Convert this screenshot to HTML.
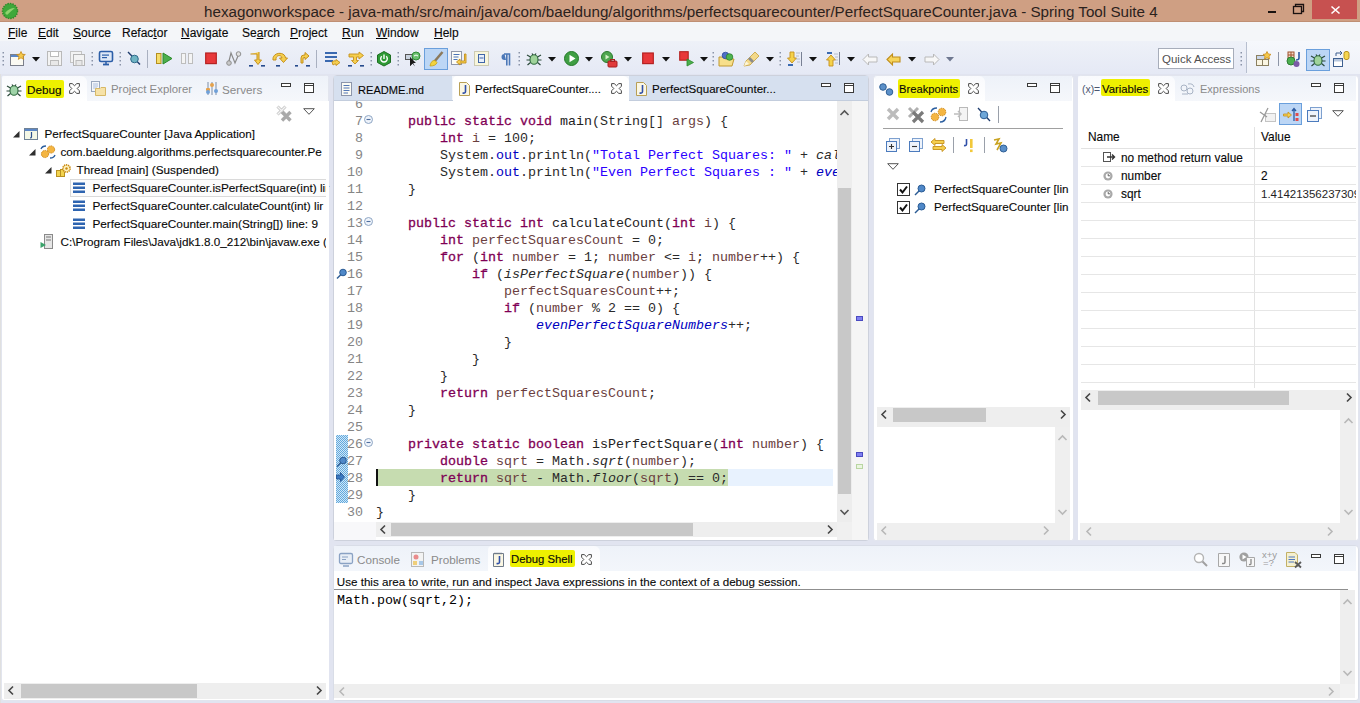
<!DOCTYPE html><html><head><meta charset="utf-8"><style>
*{margin:0;padding:0;box-sizing:border-box}
html,body{width:1360px;height:703px;overflow:hidden}
body{background:#e1e4f0;font-family:"Liberation Sans",sans-serif;font-size:12px;color:#1e1e1e;position:relative}
.a{position:absolute}
.nw{white-space:nowrap}
svg{position:absolute;overflow:visible}
.mono{font-family:"Liberation Mono",monospace}
#menu span{position:absolute;top:4px;font-size:12px;color:#0a0a0a;-webkit-text-stroke:0.12px #000;white-space:nowrap}
#menu u{text-decoration:underline;text-underline-offset:1px}
.panel{position:absolute;background:#fff;border:1px solid #d0d7e7;border-radius:4px 4px 3px 3px;overflow:hidden}
</style></head><body><div class="a" style="left:0px;top:0px;width:1360px;height:22px;background:#cf9f83"></div><div class="a" style="left:0px;top:21px;width:1360px;height:1px;background:#bf8f74"></div><svg style="left:1px;top:2px" width="18" height="18" viewBox="0 0 18 18"><circle cx="9" cy="9" r="7.5" fill="#3fa83a"/><path d="M4 11 Q8 6 14 6 Q10 9 6 13Z" fill="#8fd26f"/><circle cx="9" cy="9" r="7.5" fill="none" stroke="#2f8a2a" stroke-width="1.5" stroke-dasharray="1.5 1"/></svg><div class="a nw" style="left:204px;top:3px;font-size:15.19px;color:#2b221d;">hexagonworkspace - java-math/src/main/java/com/baeldung/algorithms/perfectsquarecounter/PerfectSquareCounter.java - Spring Tool Suite 4</div><div class="a" style="left:1268px;top:11px;width:8px;height:2px;background:#1a1210"></div><svg style="left:1293px;top:4px" width="11" height="10" viewBox="0 0 11 10"><rect x="0.5" y="2.5" width="8" height="7" fill="none" stroke="#1a1210" stroke-width="1.3"/><path d="M2.5 2.5V0.5H10.5V7.5H8.5" fill="none" stroke="#1a1210" stroke-width="1.3"/></svg><div class="a" style="left:1312px;top:0px;width:45px;height:19px;background:#c75150"></div><svg style="left:1331px;top:6px" width="9" height="8" viewBox="0 0 9 8"><path d="M0.5 0.5L8.5 7.5M8.5 0.5L0.5 7.5" stroke="#fff" stroke-width="1.6"/></svg><div id="menu" class="a" style="left:0;top:22px;width:1360px;height:19px;background:#f4f6f9"><span style="left:8px"><u>F</u>ile</span><span style="left:38px"><u>E</u>dit</span><span style="left:73px"><u>S</u>ource</span><span style="left:122px">Refac<u>t</u>or</span><span style="left:181px"><u>N</u>avigate</span><span style="left:242px">Se<u>a</u>rch</span><span style="left:290px"><u>P</u>roject</span><span style="left:342px"><u>R</u>un</span><span style="left:376px"><u>W</u>indow</span><span style="left:434px"><u>H</u>elp</span></div><div class="a" style="left:0px;top:41px;width:1360px;height:33px;background:linear-gradient(#eef1f8,#e5e9f5)"></div><div class="a" style="left:1246px;top:41px;width:114px;height:33px;background:linear-gradient(#f6f8fc,#eef1f8)"></div><svg style="left:2px;top:51px" width="3" height="16" viewBox="0 0 3 16"><rect x="0.5" y="1" width="1.5" height="1.5" fill="#8a93a8"/><rect x="0.5" y="5" width="1.5" height="1.5" fill="#8a93a8"/><rect x="0.5" y="9" width="1.5" height="1.5" fill="#8a93a8"/><rect x="0.5" y="13" width="1.5" height="1.5" fill="#8a93a8"/></svg><svg style="left:10px;top:51px" width="16" height="16" viewBox="0 0 16 16"><rect x="0.5" y="3.5" width="13" height="11" fill="#fbfaf2" stroke="#7b7f8a"/><rect x="1" y="4" width="12" height="2" fill="#5b86c6"/><path d="M11 0.5L12.3 3.2L15.3 3.5L13 5.4L13.7 8.4L11 6.8L8.3 8.4L9 5.4L6.7 3.5L9.7 3.2Z" fill="#f4c84a" stroke="#c98b1a" stroke-width="0.8"/></svg><svg style="left:32px;top:57px" width="8" height="5" viewBox="0 0 8 5"><path d="M0 0H8L4 4.5Z" fill="#111"/></svg><svg style="left:47px;top:51px" width="15" height="15" viewBox="0 0 15 15"><rect x="0.5" y="0.5" width="14" height="14" fill="#f3f3f3" stroke="#b9b9b9"/><rect x="3.5" y="0.5" width="8" height="5" fill="#fff" stroke="#bbb"/><rect x="3.5" y="9.5" width="8" height="5" fill="#e8e8e8" stroke="#bbb"/></svg><svg style="left:70px;top:51px" width="15" height="15" viewBox="0 0 15 15"><rect x="0.5" y="0.5" width="11" height="11" fill="#f3f3f3" stroke="#c4c4c4"/><rect x="3.5" y="3.5" width="11" height="11" fill="#f3f3f3" stroke="#b5b5b5"/><rect x="6" y="9.5" width="6" height="5" fill="#e8e8e8" stroke="#bbb"/></svg><svg style="left:91px;top:51px" width="3" height="16" viewBox="0 0 3 16"><rect x="0.5" y="1" width="1.5" height="1.5" fill="#8a93a8"/><rect x="0.5" y="5" width="1.5" height="1.5" fill="#8a93a8"/><rect x="0.5" y="9" width="1.5" height="1.5" fill="#8a93a8"/><rect x="0.5" y="13" width="1.5" height="1.5" fill="#8a93a8"/></svg><svg style="left:99px;top:51px" width="15" height="15" viewBox="0 0 15 15"><rect x="0.5" y="0.5" width="13" height="10" rx="1.5" fill="#dfe9f7" stroke="#2c5ea8" stroke-width="1.6"/><rect x="3" y="3.5" width="7" height="1.2" fill="#2c5ea8"/><rect x="3" y="6" width="5" height="1.2" fill="#2c5ea8"/><path d="M4 13.5H10" stroke="#2c5ea8" stroke-width="1.8"/><path d="M7 11V13" stroke="#2c5ea8" stroke-width="1.5"/></svg><svg style="left:119px;top:51px" width="3" height="16" viewBox="0 0 3 16"><rect x="0.5" y="1" width="1.5" height="1.5" fill="#8a93a8"/><rect x="0.5" y="5" width="1.5" height="1.5" fill="#8a93a8"/><rect x="0.5" y="9" width="1.5" height="1.5" fill="#8a93a8"/><rect x="0.5" y="13" width="1.5" height="1.5" fill="#8a93a8"/></svg><svg style="left:127px;top:51px" width="14" height="15" viewBox="0 0 14 15"><path d="M1 1L13 13.5" stroke="#1f3c6e" stroke-width="1.4"/><circle cx="7.5" cy="8" r="3.8" fill="#6fb4c4" stroke="#2f6a8a"/></svg><div class="a" style="left:147px;top:50px;width:1px;height:18px;background:#a9b0c0"></div><svg style="left:156px;top:51px" width="17" height="15" viewBox="0 0 17 15"><rect x="0.5" y="2.5" width="4.5" height="10" fill="#f6dd6a" stroke="#b58f1f"/><path d="M7 2L16 7.5L7 13Z" fill="#4cae4c" stroke="#2a8a2a"/></svg><svg style="left:181px;top:51px" width="13" height="15" viewBox="0 0 13 15"><rect x="0.5" y="2.5" width="4" height="10" fill="#f4f4f4" stroke="#bdbdbd"/><rect x="7.5" y="2.5" width="4" height="10" fill="#f4f4f4" stroke="#bdbdbd"/></svg><svg style="left:205px;top:51px" width="12" height="15" viewBox="0 0 12 15"><rect x="0.7" y="2" width="10.6" height="10.6" fill="#e8383a" stroke="#b52222" stroke-width="1.2"/></svg><svg style="left:226px;top:51px" width="15" height="15" viewBox="0 0 15 15"><circle cx="3" cy="12" r="2.3" fill="#c9c9c9" stroke="#8f8f8f"/><circle cx="12.5" cy="3" r="2.3" fill="#e0e0e0" stroke="#8f8f8f"/><path d="M3 10L5 2L9 12L12 5" fill="none" stroke="#8a8a8a" stroke-width="1.2"/></svg><svg style="left:249px;top:51px" width="16" height="16" viewBox="0 0 16 16"><path d="M1.5 3H8V9H5.5L9 13.5L12.5 9H10V1" fill="#f5cf4f" stroke="#c5901c" stroke-width="1"/><rect x="0" y="14" width="4" height="1.6" fill="#254a8c"/><rect x="12" y="14" width="4" height="1.6" fill="#254a8c"/></svg><svg style="left:272px;top:51px" width="16" height="16" viewBox="0 0 16 16"><path d="M1 9C0 1 13 0 13.5 7H15.5L11.5 11.5L7.5 7H10C9.5 3.5 3.5 3.5 4 9Z" fill="#f5cf4f" stroke="#c5901c" stroke-width="1"/><rect x="4" y="14" width="4" height="1.6" fill="#254a8c"/></svg><svg style="left:295px;top:51px" width="16" height="16" viewBox="0 0 16 16"><path d="M6 12V7Q6 4 9 4H10V1.5L14 5L10 8.5V6.5H9Q8 6.5 8 8V12Z" fill="#f5cf4f" stroke="#c5901c" stroke-width="1"/><rect x="0" y="14" width="3" height="1.6" fill="#254a8c"/><rect x="11" y="14" width="4" height="1.6" fill="#254a8c"/></svg><div class="a" style="left:316px;top:50px;width:1px;height:18px;background:#a9b0c0"></div><svg style="left:325px;top:51px" width="16" height="16" viewBox="0 0 16 16"><rect x="0" y="1" width="12" height="2" fill="#3a69b0"/><rect x="0" y="5" width="12" height="2" fill="#3a69b0"/><rect x="0" y="9" width="8" height="2" fill="#3a69b0"/><path d="M7 11Q9 9 11 10V8.5L15 11.5L11 14.5V13Q9 13 8 14Z" fill="#f5cf4f" stroke="#c5901c" stroke-width="0.9"/></svg><svg style="left:348px;top:51px" width="17" height="16" viewBox="0 0 17 16"><path d="M1 3H11V1L15.5 4.5L11 8V6H8.5V9.5H10.5L7 13L3.5 9.5H5.5V6H1Z" fill="#f5cf4f" stroke="#c5901c" stroke-width="0.9"/><rect x="0" y="14" width="4" height="1.6" fill="#254a8c"/><rect x="12" y="14" width="4" height="1.6" fill="#254a8c"/></svg><svg style="left:370px;top:51px" width="3" height="16" viewBox="0 0 3 16"><rect x="0.5" y="1" width="1.5" height="1.5" fill="#8a93a8"/><rect x="0.5" y="5" width="1.5" height="1.5" fill="#8a93a8"/><rect x="0.5" y="9" width="1.5" height="1.5" fill="#8a93a8"/><rect x="0.5" y="13" width="1.5" height="1.5" fill="#8a93a8"/></svg><svg style="left:377px;top:51px" width="14" height="15" viewBox="0 0 14 15"><path d="M7 0.5L13.5 4V11.5L7 15L0.5 11.5V4Z" fill="#2e9a35" stroke="#1d6e22"/><path d="M4.8 5.3A3.3 3.3 0 1 0 9.2 5.3" fill="none" stroke="#fff" stroke-width="1.4"/><path d="M7 3.5V8" stroke="#fff" stroke-width="1.4"/></svg><svg style="left:397px;top:51px" width="3" height="16" viewBox="0 0 3 16"><rect x="0.5" y="1" width="1.5" height="1.5" fill="#8a93a8"/><rect x="0.5" y="5" width="1.5" height="1.5" fill="#8a93a8"/><rect x="0.5" y="9" width="1.5" height="1.5" fill="#8a93a8"/><rect x="0.5" y="13" width="1.5" height="1.5" fill="#8a93a8"/></svg><svg style="left:405px;top:51px" width="16" height="16" viewBox="0 0 16 16"><rect x="0.5" y="3.5" width="7" height="5" fill="#c9d2de" stroke="#555"/><path d="M5 6L5 15L7.5 12.5L10 15.5" fill="#1b1b1b"/><path d="M5 6L5 15L8 12L11 12Z" fill="#1b1b1b"/><circle cx="11" cy="5" r="4" fill="#6cc070" stroke="#2f8a34"/><path d="M9 5Q11 3 13 5" fill="none" stroke="#fff" stroke-width="1"/></svg><div class="a" style="left:424px;top:48px;width:24px;height:22px;background:#bcd6f5;border:1px solid #6a9fdc"></div><svg style="left:428px;top:51px" width="16" height="16" viewBox="0 0 16 16"><path d="M14.5 1L6 11" stroke="#8c7a5c" stroke-width="2.5"/><path d="M2 15Q3 9 7 9.5L9 11.5Q8 15 2 15Z" fill="#f2d33e" stroke="#c9a316" stroke-width="0.8"/></svg><svg style="left:451px;top:51px" width="16" height="16" viewBox="0 0 16 16"><rect x="0.5" y="0.5" width="10" height="13" fill="#fdfdf7" stroke="#9098aa"/><rect x="2.5" y="3" width="6" height="1" fill="#4a74b8"/><rect x="2.5" y="5.5" width="5" height="1" fill="#4a74b8"/><rect x="2.5" y="8" width="4" height="1" fill="#4a74b8"/><path d="M13.5 3V10H9V8L5.5 11L9 14V12H15V3Z" fill="#f5cf4f" stroke="#c5901c" stroke-width="0.9"/></svg><svg style="left:474px;top:51px" width="15" height="15" viewBox="0 0 15 15"><rect x="0.5" y="0.5" width="14" height="14" fill="#f8f6dc" stroke="#a9a47a" stroke-dasharray="1 1"/><rect x="4.5" y="3.5" width="6" height="8" fill="#e7effa" stroke="#4066a8"/><rect x="5.5" y="6.5" width="4" height="1" fill="#4066a8"/></svg><svg style="left:500px;top:53px" width="10" height="13" viewBox="0 0 10 13"><path d="M4 1H9.5V12.5M6.8 1V12.5" stroke="#4c78b8" stroke-width="1.6" fill="none"/><path d="M4.5 1A3 3 0 0 0 4.5 7H6" fill="#4c78b8"/></svg><svg style="left:518px;top:51px" width="3" height="16" viewBox="0 0 3 16"><rect x="0.5" y="1" width="1.5" height="1.5" fill="#8a93a8"/><rect x="0.5" y="5" width="1.5" height="1.5" fill="#8a93a8"/><rect x="0.5" y="9" width="1.5" height="1.5" fill="#8a93a8"/><rect x="0.5" y="13" width="1.5" height="1.5" fill="#8a93a8"/></svg><svg style="left:526px;top:51px" width="16" height="16" viewBox="0 0 16 16"><ellipse cx="8" cy="8.5" rx="4" ry="4.8" fill="#9fd39a" stroke="#2f6e3e" stroke-width="1.1"/><path d="M1 4L4.5 6M15 4L11.5 6M0.5 9H4M15.5 9H12M1.5 14L4.5 11.5M14.5 14L11.5 11.5M6 2.5L7 4M10 2.5L9 4" stroke="#2b4a3a" stroke-width="1.2"/></svg><svg style="left:548px;top:57px" width="8" height="5" viewBox="0 0 8 5"><path d="M0 0H8L4 4.5Z" fill="#111"/></svg><svg style="left:564px;top:51px" width="15" height="15" viewBox="0 0 15 15"><circle cx="7.5" cy="7.5" r="7" fill="#3f9e43" stroke="#237a28"/><path d="M5.5 3.8L11.5 7.5L5.5 11.2Z" fill="#fff"/></svg><svg style="left:585px;top:57px" width="8" height="5" viewBox="0 0 8 5"><path d="M0 0H8L4 4.5Z" fill="#111"/></svg><svg style="left:601px;top:51px" width="17" height="17" viewBox="0 0 17 17"><circle cx="6" cy="6" r="5.5" fill="#4ea64f" stroke="#2a7a2d"/><path d="M4.5 3.5L8.5 6L4.5 8.5Z" fill="#d6f0c9"/><rect x="7" y="10" width="9" height="6" rx="1" fill="#e13a3a" stroke="#a81f1f"/><rect x="9.5" y="8.5" width="4" height="2" fill="none" stroke="#a81f1f"/></svg><svg style="left:624px;top:57px" width="8" height="5" viewBox="0 0 8 5"><path d="M0 0H8L4 4.5Z" fill="#111"/></svg><svg style="left:642px;top:51px" width="12" height="15" viewBox="0 0 12 15"><rect x="0.7" y="2" width="10.6" height="10.6" fill="#e8383a" stroke="#b52222" stroke-width="1.2"/></svg><svg style="left:662px;top:57px" width="8" height="5" viewBox="0 0 8 5"><path d="M0 0H8L4 4.5Z" fill="#111"/></svg><svg style="left:679px;top:51px" width="15" height="16" viewBox="0 0 15 16"><rect x="0.7" y="0.7" width="8.5" height="8.5" fill="#e8383a" stroke="#b52222" stroke-width="1.1"/><path d="M8 8L14.5 11.5L8 15Z" fill="#4cae4c" stroke="#2a8a2a" stroke-width="0.8"/></svg><svg style="left:700px;top:57px" width="8" height="5" viewBox="0 0 8 5"><path d="M0 0H8L4 4.5Z" fill="#111"/></svg><svg style="left:712px;top:51px" width="3" height="16" viewBox="0 0 3 16"><rect x="0.5" y="1" width="1.5" height="1.5" fill="#8a93a8"/><rect x="0.5" y="5" width="1.5" height="1.5" fill="#8a93a8"/><rect x="0.5" y="9" width="1.5" height="1.5" fill="#8a93a8"/><rect x="0.5" y="13" width="1.5" height="1.5" fill="#8a93a8"/></svg><svg style="left:718px;top:51px" width="18" height="16" viewBox="0 0 18 16"><path d="M1 6H6L8 8H16L14 15H1Z" fill="#f7df8a" stroke="#c19a32"/><circle cx="7.5" cy="4.5" r="3.3" fill="#4f6fc6" stroke="#2c4a9a" stroke-width="0.8"/><circle cx="11.5" cy="6" r="3.3" fill="#4fb44f" stroke="#2a8030" stroke-width="0.8"/></svg><svg style="left:743px;top:51px" width="17" height="16" viewBox="0 0 17 16"><path d="M1 15L3 10L12 1L16 5L7 14Z" fill="#f3d98a" stroke="#c9a74a" stroke-width="0.9"/><path d="M5 8L9 12L11 10L7 6Z" fill="#8c8c8c"/><path d="M1 15L3 10L6 13Z" fill="#fdf6d8"/></svg><svg style="left:766px;top:57px" width="8" height="5" viewBox="0 0 8 5"><path d="M0 0H8L4 4.5Z" fill="#111"/></svg><svg style="left:779px;top:51px" width="3" height="16" viewBox="0 0 3 16"><rect x="0.5" y="1" width="1.5" height="1.5" fill="#8a93a8"/><rect x="0.5" y="5" width="1.5" height="1.5" fill="#8a93a8"/><rect x="0.5" y="9" width="1.5" height="1.5" fill="#8a93a8"/><rect x="0.5" y="13" width="1.5" height="1.5" fill="#8a93a8"/></svg><svg style="left:787px;top:51px" width="16" height="16" viewBox="0 0 16 16"><path d="M3 1H7V7H9.5L5 12L0.5 7H3Z" fill="#f5d24a" stroke="#c5901c" stroke-width="0.9"/><rect x="1" y="13" width="5" height="2" fill="#3a6ab0"/><path d="M9 2H13M9 5H12M9 8H13M10 11H13" stroke="#aab3c2" stroke-width="0.8"/><path d="M14.5 1V15" stroke="#6b7488" stroke-width="0.9"/></svg><svg style="left:809px;top:57px" width="8" height="5" viewBox="0 0 8 5"><path d="M0 0H8L4 4.5Z" fill="#111"/></svg><svg style="left:825px;top:51px" width="16" height="16" viewBox="0 0 16 16"><path d="M4 15H8V9H10.5L6 4L1.5 9H4Z" fill="#f5d24a" stroke="#c5901c" stroke-width="0.9"/><rect x="2" y="1" width="5" height="2" fill="#3a6ab0"/><path d="M9 3H13M10 6H13M10 9H13M10 12H13" stroke="#aab3c2" stroke-width="0.8"/><path d="M14.5 1V14" stroke="#6b7488" stroke-width="0.9"/></svg><svg style="left:847px;top:57px" width="8" height="5" viewBox="0 0 8 5"><path d="M0 0H8L4 4.5Z" fill="#111"/></svg><svg style="left:862px;top:53px" width="16" height="13" viewBox="0 0 16 13"><path d="M1 6.5L6.5 1V4H15V9H6.5V12Z" fill="#f7f7f7" stroke="#b9b9b9"/></svg><svg style="left:886px;top:53px" width="15" height="13" viewBox="0 0 15 13"><path d="M1 6.5L6.5 1V4H14V9H6.5V12Z" fill="#f6d45a" stroke="#c08e1a" stroke-width="1.1"/></svg><svg style="left:908px;top:57px" width="8" height="5" viewBox="0 0 8 5"><path d="M0 0H8L4 4.5Z" fill="#111"/></svg><svg style="left:924px;top:53px" width="16" height="13" viewBox="0 0 16 13"><path d="M15 6.5L9.5 1V4H1V9H9.5V12Z" fill="#f7f7f7" stroke="#b9b9b9"/></svg><svg style="left:946px;top:57px" width="8" height="5" viewBox="0 0 8 5"><path d="M0 0H8L4 4.5Z" fill="#6f7890"/></svg><div class="a" style="left:1158px;top:48px;width:76px;height:21px;background:#fff;border:1px solid #a7adba"></div><div class="a nw" style="left:1162px;top:54.26px;font-size:11.5px;line-height:11.5px;color:#505050">Quick Access</div><svg style="left:1240px;top:51px" width="3" height="16" viewBox="0 0 3 16"><rect x="0.5" y="1" width="1.5" height="1.5" fill="#8a93a8"/><rect x="0.5" y="5" width="1.5" height="1.5" fill="#8a93a8"/><rect x="0.5" y="9" width="1.5" height="1.5" fill="#8a93a8"/><rect x="0.5" y="13" width="1.5" height="1.5" fill="#8a93a8"/></svg><div class="a" style="left:1246px;top:42px;width:1px;height:31px;background:#b7bfcf"></div><svg style="left:1256px;top:51px" width="15" height="15" viewBox="0 0 15 15"><rect x="0.5" y="4.5" width="12" height="10" fill="#fbf6e2" stroke="#8b8060"/><path d="M0.5 8.5H12.5M6.5 4.5V14.5" stroke="#8b8060"/><rect x="1" y="5" width="11" height="3" fill="#c9d6ea"/><path d="M11 0.5L12.3 3L15 3.4L13 5.2L13.5 8L11 6.7L8.5 8L9 5.2L7 3.4L9.7 3Z" fill="#f4c84a" stroke="#c98b1a" stroke-width="0.8"/></svg><div class="a" style="left:1278px;top:52px;width:1px;height:14px;background:#8d95a6"></div><svg style="left:1286px;top:51px" width="17" height="16" viewBox="0 0 17 16"><rect x="2" y="1" width="6" height="6" fill="#f4d9c9" stroke="#a0522d"/><path d="M2 4H8M5 1V7" stroke="#a0522d"/><circle cx="5" cy="10" r="4" fill="#4caf50" stroke="#2e7d32"/><circle cx="10.5" cy="13" r="3" fill="#7b5aa6"/><path d="M13 1V7Q13 9 10 9" fill="none" stroke="#2c5aa0" stroke-width="1.6"/></svg><div class="a" style="left:1306px;top:49px;width:24px;height:22px;background:#bcd6f5;border:1px solid #6a9fdc"></div><svg style="left:1310px;top:52px" width="16" height="16" viewBox="0 0 16 16"><ellipse cx="8" cy="8.5" rx="4" ry="4.8" fill="#9fd39a" stroke="#2f6e3e" stroke-width="1.1"/><path d="M1 4L4.5 6M15 4L11.5 6M0.5 9H4M15.5 9H12M1.5 14L4.5 11.5M14.5 14L11.5 11.5M6 2.5L7 4M10 2.5L9 4" stroke="#2b4a3a" stroke-width="1.2"/></svg><svg style="left:1333px;top:51px" width="16" height="16" viewBox="0 0 16 16"><rect x="0.5" y="7.5" width="9" height="8" fill="#fff" stroke="#3d5f8f"/><rect x="1" y="8" width="8" height="2.5" fill="#b7c7de"/><rect x="11" y="0.5" width="5" height="8" rx="2" fill="#f5d54f" stroke="#b9921a"/><path d="M3 5V2H9M7 0L9 2L7 4" fill="none" stroke="#3d5f8f" stroke-width="1"/></svg><div class="panel" style="left:1px;top:75px;width:328px;height:626px;border-color:#e2e5ee"></div><div class="a" style="left:0px;top:74px;width:1px;height:629px;background:#e0e0e0"></div><div class="a" style="left:2px;top:76px;width:326px;height:25px;background:linear-gradient(#eef2f9,#f5f7fb)"></div><div class="a" style="left:2px;top:76px;width:85px;height:25px;background:linear-gradient(#f9fafd,#ffffff);border-radius:3px 6px 0 0"></div><svg style="left:6px;top:82px" width="16" height="16" viewBox="0 0 16 16"><ellipse cx="8" cy="8.5" rx="4" ry="4.8" fill="#9fd3a8" stroke="#2f6e3e" stroke-width="1.1"/><path d="M1 4L4.5 6M15 4L11.5 6M0.5 9H4M15.5 9H12M1.5 14L4.5 11.5M14.5 14L11.5 11.5M6 2.5L7 4M10 2.5L9 4" stroke="#2b4a3a" stroke-width="1.2"/></svg><div class="a" style="left:26px;top:80px;width:38px;height:18px;background:#eef000;border-radius:2px"></div><div class="a nw" style="left:27px;top:83.69px;font-size:11.7px;line-height:11.7px;color:#0a0a0a;-webkit-text-stroke:0.12px #000;">Debug</div><svg style="left:69px;top:83px" width="11" height="11" viewBox="0 0 11 11"><path d="M0.6 0.6H3.2L5.5 2.7L7.8 0.6H10.4V3.2L8.2 5.5L10.4 7.8V10.4H7.8L5.5 8.3L3.2 10.4H0.6V7.8L2.8 5.5L0.6 3.2Z" fill="#fff" stroke="#4a4a4a" stroke-width="1"/></svg><svg style="left:91px;top:81px" width="15" height="15" viewBox="0 0 15 15"><rect x="0.5" y="0.5" width="8" height="10" fill="#f4f6fa" stroke="#9aa7bd"/><path d="M2 3H7M2 5H7M2 7H6" stroke="#9ab0d4" stroke-width="0.8"/><path d="M4.5 7.5H9L10 6.5H14.5V14.5H4.5Z" fill="#f6e2a8" stroke="#d7b866"/></svg><div class="a nw" style="left:111px;top:83.95px;font-size:11.4px;line-height:11.4px;color:#8a8a8a;">Project Explorer</div><svg style="left:205px;top:81px" width="14" height="15" viewBox="0 0 14 15"><path d="M3 1V14M7 1V14M11 1V14" stroke="#7c8da6" stroke-width="1"/><rect x="1" y="7" width="4" height="3" rx="1" fill="#e5a24c"/><circle cx="7" cy="4" r="2" fill="#e5a24c"/><circle cx="11" cy="10" r="2" fill="#6fa0d8"/><circle cx="3" cy="11" r="2" fill="#6fa0d8"/></svg><div class="a nw" style="left:222px;top:83.69px;font-size:11.7px;line-height:11.7px;color:#8a8a8a;">Servers</div><div class="a" style="left:281px;top:83px;width:10px;height:4px;border:1px solid #3a3a3a;background:#fff"></div><div class="a" style="left:304px;top:83px;width:10px;height:10px;border:1px solid #3a3a3a;background:#fff"></div><div class="a" style="left:304px;top:85px;width:10px;height:1px;background:#3a3a3a"></div><svg style="left:276px;top:105px" width="16" height="18" viewBox="0 0 16 18"><path d="M1.5 1.5L9.5 9.5M9.5 1.5L1.5 9.5" stroke="#c4c4c4" stroke-width="3"/><path d="M1.5 1.5L9.5 9.5M9.5 1.5L1.5 9.5" stroke="#f4f4f4" stroke-width="1.2"/><path d="M6 7L14.5 15.5M14.5 7L6 15.5" stroke="#a9a9a9" stroke-width="3.4"/></svg><svg style="left:303px;top:108px" width="12" height="7" viewBox="0 0 12 7"><path d="M0.7 0.7H11.3L6 6.3Z" fill="#fff" stroke="#555" stroke-width="1"/></svg><svg style="left:13px;top:131px" width="7" height="7" viewBox="0 0 7 7"><path d="M6.5 0V6.5H0Z" fill="#2e2e2e"/></svg><svg style="left:24px;top:128px" width="14" height="12" viewBox="0 0 14 12"><rect x="0.5" y="0.5" width="13" height="11" fill="#f3f7e6" stroke="#6f8296"/><rect x="1" y="1" width="12" height="2" fill="#5b86c6"/><path d="M7.5 4V9Q7.5 10 6 10" fill="none" stroke="#2a4f8f" stroke-width="1.2"/></svg><div class="a nw" style="left:44.5px;top:127.69px;font-size:11.7px;line-height:11.7px;color:#0a0a0a;-webkit-text-stroke:0.12px #000;">PerfectSquareCounter [Java Application]</div><svg style="left:29px;top:149px" width="7" height="7" viewBox="0 0 7 7"><path d="M6.5 0V6.5H0Z" fill="#2e2e2e"/></svg><svg style="left:40px;top:145px" width="16" height="14" viewBox="0 0 16 14"><circle cx="5" cy="9" r="3.6" fill="#f4b542" stroke="#d08a1a" stroke-dasharray="1.5 0.8"/><circle cx="11" cy="4.5" r="3.6" fill="#f4b542" stroke="#d08a1a" stroke-dasharray="1.5 0.8"/><path d="M1 4Q2 1 6 1M15 10Q14 13 10 13" fill="none" stroke="#2c5fa0" stroke-width="1.3"/></svg><div class="a nw" style="left:60.5px;top:145.89px;font-size:11.7px;line-height:11.7px;color:#0a0a0a;-webkit-text-stroke:0.12px #000;">com.baeldung.algorithms.perfectsquarecounter.Pe</div><svg style="left:45px;top:167px" width="7" height="7" viewBox="0 0 7 7"><path d="M6.5 0V6.5H0Z" fill="#2e2e2e"/></svg><svg style="left:56px;top:164px" width="15" height="13" viewBox="0 0 15 13"><rect x="0.5" y="6.5" width="4" height="6" fill="#f2d34f" stroke="#b99120"/><rect x="4.5" y="5.5" width="4" height="7" fill="#f2d34f" stroke="#b99120"/><circle cx="10.5" cy="4.5" r="3.6" fill="#fff3c0" stroke="#c98a10" stroke-width="1.6" stroke-dasharray="1.3 0.7"/><circle cx="10.5" cy="4.5" r="1.2" fill="#c98a10"/></svg><div class="a nw" style="left:76.5px;top:163.99px;font-size:11.7px;line-height:11.7px;color:#0a0a0a;-webkit-text-stroke:0.12px #000;">Thread [main] (Suspended)</div><div class="a" style="left:70px;top:179px;width:259px;height:18px;border:1px solid #dadada;border-right:none;background:#fcfcfc"></div><svg style="left:73px;top:182px" width="13" height="12" viewBox="0 0 13 12"><rect x="0" y="0.5" width="12" height="2.5" fill="#2e64b0"/><rect x="0" y="4.5" width="12" height="2.5" fill="#2e64b0"/><rect x="0" y="8.5" width="12" height="2.5" fill="#2e64b0"/></svg><div class="a nw" style="left:92.4px;top:182.91px;font-size:11.8px;line-height:11.8px;color:#0a0a0a;-webkit-text-stroke:0.12px #000;">PerfectSquareCounter.isPerfectSquare(int) lir</div><svg style="left:73px;top:200px" width="13" height="12" viewBox="0 0 13 12"><rect x="0" y="0.5" width="12" height="2.5" fill="#2e64b0"/><rect x="0" y="4.5" width="12" height="2.5" fill="#2e64b0"/><rect x="0" y="8.5" width="12" height="2.5" fill="#2e64b0"/></svg><div class="a nw" style="left:92.4px;top:200.91px;font-size:11.8px;line-height:11.8px;color:#0a0a0a;-webkit-text-stroke:0.12px #000;">PerfectSquareCounter.calculateCount(int) lir</div><svg style="left:73px;top:218px" width="13" height="12" viewBox="0 0 13 12"><rect x="0" y="0.5" width="12" height="2.5" fill="#2e64b0"/><rect x="0" y="4.5" width="12" height="2.5" fill="#2e64b0"/><rect x="0" y="8.5" width="12" height="2.5" fill="#2e64b0"/></svg><div class="a nw" style="left:92.4px;top:218.91px;font-size:11.8px;line-height:11.8px;color:#0a0a0a;-webkit-text-stroke:0.12px #000;">PerfectSquareCounter.main(String[]) line: 9</div><svg style="left:40px;top:234px" width="14" height="15" viewBox="0 0 14 15"><rect x="4.5" y="0.5" width="8" height="14" fill="#e6e6e6" stroke="#8a8a8a"/><path d="M6 3H11M6 6H11" stroke="#777"/><path d="M0.5 8L6 11L0.5 14Z" fill="#3aa36a"/></svg><div class="a nw" style="left:60.5px;top:236.09px;font-size:11.7px;line-height:11.7px;color:#0a0a0a;-webkit-text-stroke:0.12px #000;">C:\Program Files\Java\jdk1.8.0_212\bin\javaw.exe (</div><div class="a" style="left:326px;top:101px;width:3px;height:599px;background:#fff"></div><div class="a" style="left:4px;top:683px;width:322px;height:16px;background:#eeeeee"></div><div class="a" style="left:21px;top:684px;width:176px;height:14px;background:#c8c8c8"></div><svg style="left:8px;top:686px" width="6" height="9" viewBox="0 0 6 9"><path d="M5 0.5L1 4.5L5 8.5" fill="none" stroke="#444" stroke-width="1.6"/></svg><svg style="left:316px;top:686px" width="6" height="9" viewBox="0 0 6 9"><path d="M1 0.5L5 4.5L1 8.5" fill="none" stroke="#444" stroke-width="1.6"/></svg><div class="panel" style="left:333px;top:75px;width:536px;height:466px;border-color:#cdd1dc"></div><div class="a" style="left:334px;top:76px;width:534px;height:24px;background:#f3f6fb"></div><div class="a" style="left:334px;top:76px;width:118px;height:24px;background:#d6e0ef"></div><div class="a" style="left:334px;top:100px;width:534px;height:1px;background:#c3cddd"></div><div class="a" style="left:453px;top:76px;width:176px;height:25px;background:#fff;border-radius:4px 6px 0 0"></div><div class="a" style="left:629px;top:76px;width:239px;height:24px;background:#d6e0ef"></div><div class="a" style="left:629px;top:100px;width:239px;height:1px;background:#c3cddd"></div><svg style="left:341px;top:82px" width="11" height="14" viewBox="0 0 11 14"><rect x="0.5" y="0.5" width="10" height="13" fill="#fbfbf4" stroke="#8d96ab"/><path d="M2.5 3.5H8.5M2.5 6H8.5M2.5 8.5H8.5M2.5 11H7" stroke="#5377b5" stroke-width="1"/></svg><div class="a nw" style="left:358px;top:84.60px;font-size:11.1px;line-height:11.1px;color:#0a0a0a;-webkit-text-stroke:0.12px #000;">README.md</div><svg style="left:459px;top:82px" width="11" height="14" viewBox="0 0 11 14"><path d="M0.5 0.5H7.5L10.5 3.5V13.5H0.5Z" fill="#fbf7e4" stroke="#b89f55"/><path d="M6.5 3V9.5Q6.5 11.5 3.5 11" fill="none" stroke="#2f4fa8" stroke-width="1.6"/></svg><div class="a nw" style="left:475px;top:84.31px;font-size:11.45px;line-height:11.45px;color:#0a0a0a;-webkit-text-stroke:0.12px #000;">PerfectSquareCounter....</div><svg style="left:611px;top:83px" width="11" height="11" viewBox="0 0 11 11"><path d="M0.6 0.6H3.2L5.5 2.7L7.8 0.6H10.4V3.2L8.2 5.5L10.4 7.8V10.4H7.8L5.5 8.3L3.2 10.4H0.6V7.8L2.8 5.5L0.6 3.2Z" fill="#fff" stroke="#4a4a4a" stroke-width="1"/></svg><svg style="left:636px;top:82px" width="11" height="14" viewBox="0 0 11 14"><path d="M0.5 0.5H7.5L10.5 3.5V13.5H0.5Z" fill="#fbf7e4" stroke="#b89f55"/><path d="M6.5 3V9.5Q6.5 11.5 3.5 11" fill="none" stroke="#2f4fa8" stroke-width="1.6"/></svg><div class="a nw" style="left:652px;top:84.22px;font-size:11.55px;line-height:11.55px;color:#0a0a0a;-webkit-text-stroke:0.12px #000;">PerfectSquareCounter...</div><div class="a" style="left:821px;top:83px;width:10px;height:4px;border:1px solid #3a3a3a;background:#fff"></div><div class="a" style="left:844px;top:83px;width:10px;height:10px;border:1px solid #3a3a3a;background:#fff"></div><div class="a" style="left:844px;top:85px;width:10px;height:1px;background:#3a3a3a"></div><div class="a" style="left:334px;top:101px;width:503px;height:421px;background:#fff"></div><svg style="left:336px;top:435px" width="12" height="68" viewBox="0 0 12 68"><defs><pattern id="hp" width="2" height="2" patternUnits="userSpaceOnUse"><rect width="2" height="2" fill="#62a9dd"/><rect width="1" height="1" fill="#cfe6f7"/><rect x="1" y="1" width="1" height="1" fill="#cfe6f7"/></pattern></defs><rect width="12" height="68" fill="url(#hp)"/></svg><div class="a" style="left:376px;top:469px;width:457px;height:17px;background:#e8f2fe"></div><div class="a" style="left:376px;top:469px;width:352px;height:17px;background:#c6dcb0"></div><div class="a" style="left:376px;top:469px;width:2px;height:17px;background:#111"></div><div class="a" style="left:334px;top:101px;width:503px;height:421px;overflow:hidden"><div class="a mono nw" style="left:13px;top:-5.05px;width:16px;text-align:right;font-size:13.33px;line-height:17px;color:#858585">6</div><div class="a mono nw" style="left:13px;top:11.95px;width:16px;text-align:right;font-size:13.33px;line-height:17px;color:#858585">7</div><div class="a mono" style="left:42px;top:11.95px;font-size:13.33px;line-height:17px;color:#2a2a2a;white-space:pre">    <span style="color:#7f0055;-webkit-text-stroke:0.3px #7f0055">public</span> <span style="color:#7f0055;-webkit-text-stroke:0.3px #7f0055">static</span> <span style="color:#7f0055;-webkit-text-stroke:0.3px #7f0055">void</span> <span style="color:#222">main</span>(String[] <span style="color:#6a3e3e">args</span>) {</div><div class="a mono nw" style="left:13px;top:28.95px;width:16px;text-align:right;font-size:13.33px;line-height:17px;color:#858585">8</div><div class="a mono" style="left:42px;top:28.95px;font-size:13.33px;line-height:17px;color:#2a2a2a;white-space:pre">        <span style="color:#7f0055;-webkit-text-stroke:0.3px #7f0055">int</span> <span style="color:#6a3e3e">i</span> = 100;</div><div class="a mono nw" style="left:13px;top:45.95px;width:16px;text-align:right;font-size:13.33px;line-height:17px;color:#858585">9</div><div class="a mono" style="left:42px;top:45.95px;font-size:13.33px;line-height:17px;color:#2a2a2a;white-space:pre">        System.<span style="color:#0000c0">out</span>.println(<span style="color:#2a00ff">"Total Perfect Squares: "</span> + <span style="font-style:italic">calculateCount</span>(<span style="color:#6a3e3e">i</span>));</div><div class="a mono nw" style="left:13px;top:62.95px;width:16px;text-align:right;font-size:13.33px;line-height:17px;color:#858585">10</div><div class="a mono" style="left:42px;top:62.95px;font-size:13.33px;line-height:17px;color:#2a2a2a;white-space:pre">        System.<span style="color:#0000c0">out</span>.println(<span style="color:#2a00ff">"Even Perfect Squares : "</span> + <span style="color:#0000c0;font-style:italic">evenPerfectSquareNumbers</span>);</div><div class="a mono nw" style="left:13px;top:79.95px;width:16px;text-align:right;font-size:13.33px;line-height:17px;color:#858585">11</div><div class="a mono" style="left:42px;top:79.95px;font-size:13.33px;line-height:17px;color:#2a2a2a;white-space:pre">    }</div><div class="a mono nw" style="left:13px;top:96.95px;width:16px;text-align:right;font-size:13.33px;line-height:17px;color:#858585">12</div><div class="a mono nw" style="left:13px;top:113.95px;width:16px;text-align:right;font-size:13.33px;line-height:17px;color:#858585">13</div><div class="a mono" style="left:42px;top:113.95px;font-size:13.33px;line-height:17px;color:#2a2a2a;white-space:pre">    <span style="color:#7f0055;-webkit-text-stroke:0.3px #7f0055">public</span> <span style="color:#7f0055;-webkit-text-stroke:0.3px #7f0055">static</span> <span style="color:#7f0055;-webkit-text-stroke:0.3px #7f0055">int</span> <span style="color:#222">calculateCount</span>(<span style="color:#7f0055;-webkit-text-stroke:0.3px #7f0055">int</span> <span style="color:#6a3e3e">i</span>) {</div><div class="a mono nw" style="left:13px;top:130.95px;width:16px;text-align:right;font-size:13.33px;line-height:17px;color:#858585">14</div><div class="a mono" style="left:42px;top:130.95px;font-size:13.33px;line-height:17px;color:#2a2a2a;white-space:pre">        <span style="color:#7f0055;-webkit-text-stroke:0.3px #7f0055">int</span> <span style="color:#6a3e3e">perfectSquaresCount</span> = 0;</div><div class="a mono nw" style="left:13px;top:147.95px;width:16px;text-align:right;font-size:13.33px;line-height:17px;color:#858585">15</div><div class="a mono" style="left:42px;top:147.95px;font-size:13.33px;line-height:17px;color:#2a2a2a;white-space:pre">        <span style="color:#7f0055;-webkit-text-stroke:0.3px #7f0055">for</span> (<span style="color:#7f0055;-webkit-text-stroke:0.3px #7f0055">int</span> <span style="color:#6a3e3e">number</span> = 1; <span style="color:#6a3e3e">number</span> &lt;= <span style="color:#6a3e3e">i</span>; <span style="color:#6a3e3e">number</span>++) {</div><div class="a mono nw" style="left:13px;top:164.95px;width:16px;text-align:right;font-size:13.33px;line-height:17px;color:#858585">16</div><div class="a mono" style="left:42px;top:164.95px;font-size:13.33px;line-height:17px;color:#2a2a2a;white-space:pre">            <span style="color:#7f0055;-webkit-text-stroke:0.3px #7f0055">if</span> (<span style="font-style:italic">isPerfectSquare</span>(<span style="color:#6a3e3e">number</span>)) {</div><div class="a mono nw" style="left:13px;top:181.95px;width:16px;text-align:right;font-size:13.33px;line-height:17px;color:#858585">17</div><div class="a mono" style="left:42px;top:181.95px;font-size:13.33px;line-height:17px;color:#2a2a2a;white-space:pre">                <span style="color:#6a3e3e">perfectSquaresCount</span>++;</div><div class="a mono nw" style="left:13px;top:198.95px;width:16px;text-align:right;font-size:13.33px;line-height:17px;color:#858585">18</div><div class="a mono" style="left:42px;top:198.95px;font-size:13.33px;line-height:17px;color:#2a2a2a;white-space:pre">                <span style="color:#7f0055;-webkit-text-stroke:0.3px #7f0055">if</span> (<span style="color:#6a3e3e">number</span> % 2 == 0) {</div><div class="a mono nw" style="left:13px;top:215.95px;width:16px;text-align:right;font-size:13.33px;line-height:17px;color:#858585">19</div><div class="a mono" style="left:42px;top:215.95px;font-size:13.33px;line-height:17px;color:#2a2a2a;white-space:pre">                    <span style="color:#0000c0;font-style:italic">evenPerfectSquareNumbers</span>++;</div><div class="a mono nw" style="left:13px;top:232.95px;width:16px;text-align:right;font-size:13.33px;line-height:17px;color:#858585">20</div><div class="a mono" style="left:42px;top:232.95px;font-size:13.33px;line-height:17px;color:#2a2a2a;white-space:pre">                }</div><div class="a mono nw" style="left:13px;top:249.95px;width:16px;text-align:right;font-size:13.33px;line-height:17px;color:#858585">21</div><div class="a mono" style="left:42px;top:249.95px;font-size:13.33px;line-height:17px;color:#2a2a2a;white-space:pre">            }</div><div class="a mono nw" style="left:13px;top:266.95px;width:16px;text-align:right;font-size:13.33px;line-height:17px;color:#858585">22</div><div class="a mono" style="left:42px;top:266.95px;font-size:13.33px;line-height:17px;color:#2a2a2a;white-space:pre">        }</div><div class="a mono nw" style="left:13px;top:283.95px;width:16px;text-align:right;font-size:13.33px;line-height:17px;color:#858585">23</div><div class="a mono" style="left:42px;top:283.95px;font-size:13.33px;line-height:17px;color:#2a2a2a;white-space:pre">        <span style="color:#7f0055;-webkit-text-stroke:0.3px #7f0055">return</span> <span style="color:#6a3e3e">perfectSquaresCount</span>;</div><div class="a mono nw" style="left:13px;top:300.95px;width:16px;text-align:right;font-size:13.33px;line-height:17px;color:#858585">24</div><div class="a mono" style="left:42px;top:300.95px;font-size:13.33px;line-height:17px;color:#2a2a2a;white-space:pre">    }</div><div class="a mono nw" style="left:13px;top:317.95px;width:16px;text-align:right;font-size:13.33px;line-height:17px;color:#858585">25</div><div class="a mono nw" style="left:13px;top:334.95px;width:16px;text-align:right;font-size:13.33px;line-height:17px;color:#858585">26</div><div class="a mono" style="left:42px;top:334.95px;font-size:13.33px;line-height:17px;color:#2a2a2a;white-space:pre">    <span style="color:#7f0055;-webkit-text-stroke:0.3px #7f0055">private</span> <span style="color:#7f0055;-webkit-text-stroke:0.3px #7f0055">static</span> <span style="color:#7f0055;-webkit-text-stroke:0.3px #7f0055">boolean</span> <span style="color:#222">isPerfectSquare</span>(<span style="color:#7f0055;-webkit-text-stroke:0.3px #7f0055">int</span> <span style="color:#6a3e3e">number</span>) {</div><div class="a mono nw" style="left:13px;top:351.95px;width:16px;text-align:right;font-size:13.33px;line-height:17px;color:#858585">27</div><div class="a mono" style="left:42px;top:351.95px;font-size:13.33px;line-height:17px;color:#2a2a2a;white-space:pre">        <span style="color:#7f0055;-webkit-text-stroke:0.3px #7f0055">double</span> <span style="color:#6a3e3e">sqrt</span> = Math.<span style="font-style:italic">sqrt</span>(<span style="color:#6a3e3e">number</span>);</div><div class="a mono nw" style="left:13px;top:368.95px;width:16px;text-align:right;font-size:13.33px;line-height:17px;color:#858585">28</div><div class="a mono" style="left:42px;top:368.95px;font-size:13.33px;line-height:17px;color:#2a2a2a;white-space:pre">        <span style="color:#7f0055;-webkit-text-stroke:0.3px #7f0055">return</span> <span style="color:#6a3e3e">sqrt</span> - Math.<span style="font-style:italic">floor</span>(<span style="color:#6a3e3e">sqrt</span>) == 0;</div><div class="a mono nw" style="left:13px;top:385.95px;width:16px;text-align:right;font-size:13.33px;line-height:17px;color:#858585">29</div><div class="a mono" style="left:42px;top:385.95px;font-size:13.33px;line-height:17px;color:#2a2a2a;white-space:pre">    }</div><div class="a mono nw" style="left:13px;top:402.95px;width:16px;text-align:right;font-size:13.33px;line-height:17px;color:#858585">30</div><div class="a mono" style="left:42px;top:402.95px;font-size:13.33px;line-height:17px;color:#2a2a2a;white-space:pre">}</div></div><svg style="left:364px;top:115px" width="9" height="9" viewBox="0 0 9 9"><circle cx="4.5" cy="4.5" r="4" fill="#eef3fa" stroke="#8fa6c4"/><path d="M2.5 4.5H6.5" stroke="#4f6f9f" stroke-width="1.1"/></svg><svg style="left:364px;top:217px" width="9" height="9" viewBox="0 0 9 9"><circle cx="4.5" cy="4.5" r="4" fill="#eef3fa" stroke="#8fa6c4"/><path d="M2.5 4.5H6.5" stroke="#4f6f9f" stroke-width="1.1"/></svg><svg style="left:364px;top:438px" width="9" height="9" viewBox="0 0 9 9"><circle cx="4.5" cy="4.5" r="4" fill="#eef3fa" stroke="#8fa6c4"/><path d="M2.5 4.5H6.5" stroke="#4f6f9f" stroke-width="1.1"/></svg><svg style="left:336px;top:268px" width="10" height="11" viewBox="0 0 10 11"><circle cx="7" cy="4.5" r="3.3" fill="#4f88c8" stroke="#2a5b94"/><path d="M5 6.5L1 10.5" stroke="#2a5b94" stroke-width="1.4"/></svg><svg style="left:336px;top:456px" width="10" height="11" viewBox="0 0 10 11"><circle cx="7" cy="4.5" r="3.3" fill="#4f88c8" stroke="#2a5b94"/><path d="M5 6.5L1 10.5" stroke="#2a5b94" stroke-width="1.4"/></svg><svg style="left:336px;top:472px" width="9" height="10" viewBox="0 0 9 10"><path d="M0.5 3H4.5V0.5L8.5 5L4.5 9.5V7H0.5Z" fill="#3a78c0" stroke="#1f4f8f" stroke-width="0.8"/></svg><div class="a" style="left:837px;top:101px;width:15px;height:421px;background:#ededed"></div><div class="a" style="left:838px;top:188px;width:13px;height:306px;background:#c8c8c8"></div><svg style="left:840px;top:110px" width="9" height="6" viewBox="0 0 9 6"><path d="M0.5 5L4.5 1L8.5 5" fill="none" stroke="#555" stroke-width="1.6"/></svg><svg style="left:840px;top:509px" width="9" height="6" viewBox="0 0 9 6"><path d="M0.5 1L4.5 5L8.5 1" fill="none" stroke="#555" stroke-width="1.6"/></svg><div class="a" style="left:852px;top:101px;width:16px;height:439px;background:#f5f5f5"></div><div class="a" style="left:856px;top:316px;width:7px;height:5px;background:#7f7ff0;border:1px solid #4a4ac0"></div><div class="a" style="left:856px;top:452px;width:7px;height:5px;background:#7f7ff0;border:1px solid #4a4ac0"></div><div class="a" style="left:856px;top:464px;width:7px;height:5px;background:#eaf5e0;border:1px solid #b9d6a2"></div><div class="a" style="left:334px;top:522px;width:42px;height:18px;background:#f8f8fa"></div><div class="a" style="left:376px;top:522px;width:461px;height:15px;background:#eeeeee"></div><div class="a" style="left:391px;top:523px;width:302px;height:13px;background:#c8c8c8"></div><svg style="left:380px;top:525px" width="6" height="9" viewBox="0 0 6 9"><path d="M5 0.5L1 4.5L5 8.5" fill="none" stroke="#444" stroke-width="1.6"/></svg><svg style="left:827px;top:525px" width="6" height="9" viewBox="0 0 6 9"><path d="M1 0.5L5 4.5L1 8.5" fill="none" stroke="#444" stroke-width="1.6"/></svg><div class="a" style="left:837px;top:522px;width:15px;height:18px;background:#f0f0f0"></div><div class="a" style="left:376px;top:537px;width:461px;height:3px;background:#fff"></div><div class="panel" style="left:873px;top:75px;width:201px;height:466px;border-color:#e2e5ee"></div><div class="a" style="left:875px;top:76px;width:197px;height:25px;background:linear-gradient(#eef2f9,#f5f7fb)"></div><div class="a" style="left:875px;top:76px;width:110px;height:25px;background:linear-gradient(#f9fafd,#fff);border-radius:3px 6px 0 0"></div><svg style="left:879px;top:83px" width="15" height="13" viewBox="0 0 15 13"><circle cx="4" cy="4" r="3.3" fill="#5a8fc8" stroke="#2f5f95"/><circle cx="10.5" cy="9" r="3.3" fill="#5a8fc8" stroke="#2f5f95"/></svg><div class="a" style="left:898px;top:79px;width:62px;height:19px;background:#eef000;border-radius:2px"></div><div class="a nw" style="left:899px;top:84.12px;font-size:11.2px;line-height:11.2px;color:#0a0a0a;-webkit-text-stroke:0.12px #000;">Breakpoints</div><svg style="left:968px;top:83px" width="11" height="11" viewBox="0 0 11 11"><path d="M0.6 0.6H3.2L5.5 2.7L7.8 0.6H10.4V3.2L8.2 5.5L10.4 7.8V10.4H7.8L5.5 8.3L3.2 10.4H0.6V7.8L2.8 5.5L0.6 3.2Z" fill="#fff" stroke="#4a4a4a" stroke-width="1"/></svg><div class="a" style="left:1027px;top:83px;width:10px;height:4px;border:1px solid #3a3a3a;background:#fff"></div><div class="a" style="left:1050px;top:83px;width:10px;height:10px;border:1px solid #3a3a3a;background:#fff"></div><div class="a" style="left:1050px;top:85px;width:10px;height:1px;background:#3a3a3a"></div><div class="a" style="left:875px;top:101px;width:197px;height:439px;background:#fff"></div><svg style="left:886px;top:107px" width="14" height="14" viewBox="0 0 14 14"><path d="M2 2L12 12M12 2L2 12" stroke="#bcbcbc" stroke-width="3.4"/></svg><svg style="left:908px;top:107px" width="16" height="16" viewBox="0 0 16 16"><path d="M1 1L10 10M10 1L1 10" stroke="#b0b0b0" stroke-width="3"/><path d="M5 5L15 15M15 5L5 15" stroke="#7a7a7a" stroke-width="3.2"/></svg><svg style="left:930px;top:107px" width="17" height="16" viewBox="0 0 17 16"><circle cx="5" cy="10" r="3.8" fill="#f4b542" stroke="#d08a1a" stroke-dasharray="1.5 0.8"/><circle cx="12" cy="5" r="3.8" fill="#f4b542" stroke="#d08a1a" stroke-dasharray="1.5 0.8"/><path d="M1 5Q2 1 7 1M16 10Q15 15 10 15" fill="none" stroke="#2c5fa0" stroke-width="1.3"/></svg><svg style="left:953px;top:107px" width="15" height="15" viewBox="0 0 15 15"><rect x="6.5" y="0.5" width="8" height="13" fill="#f4f4f4" stroke="#b9b9b9"/><path d="M1 7H8M5 4L8 7L5 10" fill="none" stroke="#bdbdbd" stroke-width="1.5"/></svg><svg style="left:977px;top:107px" width="14" height="15" viewBox="0 0 14 15"><path d="M1 1L13 14" stroke="#1f3c6e" stroke-width="1.3"/><circle cx="7" cy="8" r="3.8" fill="#6fa7d8" stroke="#2f5f95"/></svg><div class="a" style="left:998px;top:106px;width:1px;height:17px;background:#9aa0aa"></div><div class="a" style="left:883px;top:128px;width:180px;height:1px;background:#a0a0a0"></div><svg style="left:886px;top:138px" width="14" height="14" viewBox="0 0 14 14"><rect x="3.5" y="0.5" width="10" height="10" fill="#eef3fb" stroke="#7da0cf"/><rect x="0.5" y="3.5" width="10" height="10" fill="#eef3fb" stroke="#4c7bbd"/><path d="M3 8.5H8M5.5 6V11" stroke="#333" stroke-width="1.1"/></svg><svg style="left:909px;top:138px" width="14" height="14" viewBox="0 0 14 14"><rect x="3.5" y="0.5" width="10" height="10" fill="#eef3fb" stroke="#7da0cf"/><rect x="0.5" y="3.5" width="10" height="10" fill="#eef3fb" stroke="#4c7bbd"/><path d="M3 8.5H8" stroke="#333" stroke-width="1.1"/></svg><svg style="left:930px;top:138px" width="17" height="14" viewBox="0 0 17 14"><path d="M1 4L5 0.5V2.5H14V5.5H5V7.5Z" fill="#f5cf4f" stroke="#c5901c" stroke-width="0.9"/><path d="M16 10L12 6.5V8.5H3V11.5H12V13.5Z" fill="#f5cf4f" stroke="#c5901c" stroke-width="0.9"/></svg><div class="a" style="left:953px;top:137px;width:1px;height:16px;background:#9aa0aa"></div><svg style="left:962px;top:138px" width="13" height="15" viewBox="0 0 13 15"><path d="M4.5 1V6Q4.5 8 2 7.5" fill="none" stroke="#2f4fa8" stroke-width="1.6"/><rect x="8" y="1" width="2.6" height="9" fill="#f2c83a"/><rect x="8" y="11.5" width="2.6" height="2.6" fill="#f2c83a"/></svg><div class="a" style="left:984px;top:137px;width:1px;height:16px;background:#9aa0aa"></div><svg style="left:992px;top:138px" width="16" height="15" viewBox="0 0 16 15"><path d="M2 2L7 1L4 6L9 5L5 12" fill="none" stroke="#c9a320" stroke-width="1.6"/><circle cx="11.5" cy="10.5" r="3.5" fill="#5a8fc8" stroke="#2f5f95"/></svg><svg style="left:887px;top:163px" width="12" height="7" viewBox="0 0 12 7"><path d="M0.7 0.7H11.3L6 6.3Z" fill="#fff" stroke="#555" stroke-width="1"/></svg><div class="a" style="left:897px;top:183px;width:13px;height:13px;border:1px solid #333;background:#fff"></div><svg style="left:899px;top:185px" width="9" height="9" viewBox="0 0 9 9"><path d="M1 4.5L3.5 7.5L8 1.5" fill="none" stroke="#111" stroke-width="2"/></svg><svg style="left:914px;top:184px" width="12" height="12" viewBox="0 0 12 12"><circle cx="7.5" cy="4.5" r="3.5" fill="#4f88c8" stroke="#2a5b94"/><path d="M5 7L1 11" stroke="#2a5b94" stroke-width="1.4"/></svg><div class="a nw" style="left:934px;top:182.59px;font-size:11.7px;line-height:11.7px;color:#0a0a0a;-webkit-text-stroke:0.12px #000;">PerfectSquareCounter [lin</div><div class="a" style="left:897px;top:201px;width:13px;height:13px;border:1px solid #333;background:#fff"></div><svg style="left:899px;top:203px" width="9" height="9" viewBox="0 0 9 9"><path d="M1 4.5L3.5 7.5L8 1.5" fill="none" stroke="#111" stroke-width="2"/></svg><svg style="left:914px;top:202px" width="12" height="12" viewBox="0 0 12 12"><circle cx="7.5" cy="4.5" r="3.5" fill="#4f88c8" stroke="#2a5b94"/><path d="M5 7L1 11" stroke="#2a5b94" stroke-width="1.4"/></svg><div class="a nw" style="left:934px;top:200.59px;font-size:11.7px;line-height:11.7px;color:#0a0a0a;-webkit-text-stroke:0.12px #000;">PerfectSquareCounter [lin</div><div class="a" style="left:1069px;top:101px;width:3px;height:300px;background:#fff"></div><div class="a" style="left:877px;top:407px;width:193px;height:20px;background:#eeeeee"></div><div class="a" style="left:893px;top:408px;width:93px;height:14px;background:#c8c8c8"></div><svg style="left:881px;top:410px" width="6" height="9" viewBox="0 0 6 9"><path d="M5 0.5L1 4.5L5 8.5" fill="none" stroke="#444" stroke-width="1.6"/></svg><svg style="left:1060px;top:410px" width="6" height="9" viewBox="0 0 6 9"><path d="M1 0.5L5 4.5L1 8.5" fill="none" stroke="#444" stroke-width="1.6"/></svg><div class="a" style="left:877px;top:427px;width:193px;height:113px;background:#efefef"></div><div class="a" style="left:877px;top:427px;width:178px;height:96px;background:#fff"></div><svg style="left:1058px;top:435px" width="9" height="6" viewBox="0 0 9 6"><path d="M0.5 5L4.5 1L8.5 5" fill="none" stroke="#b8b8b8" stroke-width="1.6"/></svg><svg style="left:1058px;top:509px" width="9" height="6" viewBox="0 0 9 6"><path d="M0.5 1L4.5 5L8.5 1" fill="none" stroke="#b8b8b8" stroke-width="1.6"/></svg><svg style="left:881px;top:526px" width="6" height="9" viewBox="0 0 6 9"><path d="M5 0.5L1 4.5L5 8.5" fill="none" stroke="#b8b8b8" stroke-width="1.6"/></svg><svg style="left:1043px;top:526px" width="6" height="9" viewBox="0 0 6 9"><path d="M1 0.5L5 4.5L1 8.5" fill="none" stroke="#b8b8b8" stroke-width="1.6"/></svg><div class="panel" style="left:1078px;top:75px;width:281px;height:466px;border-color:#e2e5ee"></div><div class="a" style="left:1078px;top:76px;width:278px;height:25px;background:linear-gradient(#eef2f9,#f5f7fb)"></div><div class="a" style="left:1078px;top:76px;width:97px;height:25px;background:linear-gradient(#f9fafd,#fff);border-radius:3px 6px 0 0"></div><div class="a nw" style="left:1082px;top:84.80px;font-size:10.4px;line-height:10.4px;color:#4a5670;">(x)=</div><div class="a" style="left:1101px;top:79px;width:49px;height:17px;background:#eef000;border-radius:2px"></div><div class="a nw" style="left:1102px;top:84.03px;font-size:11.3px;line-height:11.3px;color:#0a0a0a;-webkit-text-stroke:0.12px #000;">Variables</div><svg style="left:1158px;top:83px" width="11" height="11" viewBox="0 0 11 11"><path d="M0.6 0.6H3.2L5.5 2.7L7.8 0.6H10.4V3.2L8.2 5.5L10.4 7.8V10.4H7.8L5.5 8.3L3.2 10.4H0.6V7.8L2.8 5.5L0.6 3.2Z" fill="#fff" stroke="#4a4a4a" stroke-width="1"/></svg><svg style="left:1180px;top:82px" width="16" height="14" viewBox="0 0 16 14"><circle cx="4" cy="6" r="3" fill="none" stroke="#a8b3c4"/><circle cx="10" cy="9" r="3" fill="none" stroke="#a8b3c4"/><path d="M8 2Q13 1 14 5M2 12H8" stroke="#a8b3c4" fill="none"/></svg><div class="a nw" style="left:1200px;top:84.29px;font-size:11.0px;line-height:11.0px;color:#8a8a8a;">Expressions</div><div class="a" style="left:1311px;top:83px;width:10px;height:4px;border:1px solid #3a3a3a;background:#fff"></div><div class="a" style="left:1334px;top:83px;width:10px;height:10px;border:1px solid #3a3a3a;background:#fff"></div><div class="a" style="left:1334px;top:85px;width:10px;height:1px;background:#3a3a3a"></div><div class="a" style="left:1078px;top:101px;width:278px;height:439px;background:#fff"></div><svg style="left:1259px;top:107px" width="17" height="16" viewBox="0 0 17 16"><rect x="6.5" y="6.5" width="10" height="8" fill="#f2f2f2" stroke="#c4c4c4"/><path d="M2 15L9 1M1 5L8 10" stroke="#9a9a9a" stroke-width="1.3"/></svg><div class="a" style="left:1279px;top:103px;width:23px;height:22px;background:#bcd6f5;border:1px solid #6a9fdc"></div><svg style="left:1283px;top:107px" width="16" height="16" viewBox="0 0 16 16"><path d="M0.5 7H5V5L8.5 8L5 11V9H0.5Z" fill="#f5cf4f" stroke="#c5901c" stroke-width="0.8"/><path d="M11 14V2M9 4L11 1.5L13 4" fill="none" stroke="#2c5aa0" stroke-width="1.3"/><rect x="12.5" y="6" width="3" height="3" fill="#e24a4a"/><rect x="12.5" y="11" width="3" height="3" fill="#e24a4a"/></svg><svg style="left:1307px;top:107px" width="15" height="15" viewBox="0 0 15 15"><rect x="3.5" y="0.5" width="11" height="11" fill="#eef3fb" stroke="#7da0cf"/><rect x="0.5" y="3.5" width="11" height="11" fill="#eef3fb" stroke="#4c7bbd"/><path d="M3 9H9" stroke="#333" stroke-width="1.2"/></svg><svg style="left:1332px;top:110px" width="12" height="7" viewBox="0 0 12 7"><path d="M0.7 0.7H11.3L6 6.3Z" fill="#fff" stroke="#555" stroke-width="1"/></svg><div class="a nw" style="left:1088px;top:132.43px;font-size:11.9px;line-height:11.9px;color:#0a0a0a;-webkit-text-stroke:0.12px #000;">Name</div><div class="a nw" style="left:1261px;top:132.43px;font-size:11.9px;line-height:11.9px;color:#0a0a0a;-webkit-text-stroke:0.12px #000;">Value</div><div class="a" style="left:1081px;top:148px;width:275px;height:1px;background:#e2e2e2"></div><div class="a" style="left:1254px;top:127px;width:1px;height:261px;background:#e3e3e3"></div><div class="a" style="left:1081px;top:166px;width:275px;height:1px;background:#e6e6e6"></div><div class="a" style="left:1081px;top:184px;width:275px;height:1px;background:#e6e6e6"></div><div class="a" style="left:1081px;top:202px;width:275px;height:1px;background:#e6e6e6"></div><div class="a" style="left:1081px;top:220px;width:275px;height:1px;background:#e6e6e6"></div><div class="a" style="left:1081px;top:238px;width:275px;height:1px;background:#e6e6e6"></div><div class="a" style="left:1081px;top:256px;width:275px;height:1px;background:#e6e6e6"></div><div class="a" style="left:1081px;top:274px;width:275px;height:1px;background:#e6e6e6"></div><div class="a" style="left:1081px;top:292px;width:275px;height:1px;background:#e6e6e6"></div><div class="a" style="left:1081px;top:310px;width:275px;height:1px;background:#e6e6e6"></div><div class="a" style="left:1081px;top:328px;width:275px;height:1px;background:#e6e6e6"></div><div class="a" style="left:1081px;top:346px;width:275px;height:1px;background:#e6e6e6"></div><div class="a" style="left:1081px;top:364px;width:275px;height:1px;background:#e6e6e6"></div><div class="a" style="left:1081px;top:382px;width:275px;height:1px;background:#e6e6e6"></div><svg style="left:1103px;top:152px" width="13" height="11" viewBox="0 0 13 11"><rect x="0.5" y="0.5" width="7" height="9" fill="#fff" stroke="#555"/><path d="M4 5H11M9 2.5L11.5 5L9 7.5" fill="none" stroke="#333" stroke-width="1.4"/></svg><div class="a nw" style="left:1121px;top:152.97px;font-size:11.85px;line-height:11.85px;color:#0a0a0a;-webkit-text-stroke:0.12px #000;">no method return value</div><svg style="left:1103px;top:171px" width="10" height="10" viewBox="0 0 10 10"><circle cx="5" cy="5" r="4.6" fill="#a9a9a9"/><circle cx="5" cy="5" r="2.4" fill="#fff"/><path d="M5 3V5H7" stroke="#a9a9a9" stroke-width="1"/></svg><div class="a nw" style="left:1121px;top:170.97px;font-size:11.85px;line-height:11.85px;color:#0a0a0a;-webkit-text-stroke:0.12px #000;">number</div><div class="a nw" style="left:1261px;top:170.97px;font-size:11.85px;line-height:11.85px;color:#0a0a0a;-webkit-text-stroke:0.12px #000;">2</div><svg style="left:1103px;top:189px" width="10" height="10" viewBox="0 0 10 10"><circle cx="5" cy="5" r="4.6" fill="#a9a9a9"/><circle cx="5" cy="5" r="2.4" fill="#fff"/><path d="M5 3V5H7" stroke="#a9a9a9" stroke-width="1"/></svg><div class="a nw" style="left:1121px;top:188.97px;font-size:11.85px;line-height:11.85px;color:#0a0a0a;-webkit-text-stroke:0.12px #000;">sqrt</div><div class="a" style="left:1255px;top:185px;width:101px;height:18px;overflow:hidden"><div class="a nw" style="left:6px;top:4.26px;font-size:11.5px;line-height:11.5px;color:#1e1e1e">1.41421356237309</div></div><div class="a" style="left:1081px;top:390px;width:275px;height:20px;background:#eeeeee"></div><div class="a" style="left:1098px;top:391px;width:191px;height:14px;background:#c8c8c8"></div><svg style="left:1085px;top:393px" width="6" height="9" viewBox="0 0 6 9"><path d="M5 0.5L1 4.5L5 8.5" fill="none" stroke="#444" stroke-width="1.6"/></svg><svg style="left:1346px;top:393px" width="6" height="9" viewBox="0 0 6 9"><path d="M1 0.5L5 4.5L1 8.5" fill="none" stroke="#444" stroke-width="1.6"/></svg><div class="a" style="left:1080px;top:410px;width:276px;height:130px;background:#efefef"></div><div class="a" style="left:1080px;top:410px;width:260px;height:113px;background:#fff"></div><svg style="left:1344px;top:418px" width="9" height="6" viewBox="0 0 9 6"><path d="M0.5 5L4.5 1L8.5 5" fill="none" stroke="#b8b8b8" stroke-width="1.6"/></svg><svg style="left:1344px;top:509px" width="9" height="6" viewBox="0 0 9 6"><path d="M0.5 1L4.5 5L8.5 1" fill="none" stroke="#b8b8b8" stroke-width="1.6"/></svg><svg style="left:1086px;top:527px" width="6" height="9" viewBox="0 0 6 9"><path d="M5 0.5L1 4.5L5 8.5" fill="none" stroke="#b8b8b8" stroke-width="1.6"/></svg><svg style="left:1327px;top:527px" width="6" height="9" viewBox="0 0 6 9"><path d="M1 0.5L5 4.5L1 8.5" fill="none" stroke="#b8b8b8" stroke-width="1.6"/></svg><div class="panel" style="left:333px;top:545px;width:1026px;height:156px;border-color:#d9dde7"></div><div class="a" style="left:334px;top:546px;width:1022px;height:25px;background:linear-gradient(#eef2f9,#f3f6fb)"></div><div class="a" style="left:488px;top:546px;width:112px;height:25px;background:linear-gradient(#f9fafd,#fff);border-radius:4px 6px 0 0"></div><svg style="left:339px;top:553px" width="15" height="14" viewBox="0 0 15 14"><rect x="0.5" y="0.5" width="13" height="10" rx="1.5" fill="#e8eef6" stroke="#8aa2c4" stroke-width="1.3"/><path d="M3 4H9M3 6.5H7" stroke="#8aa2c4"/><path d="M4 13H10" stroke="#8aa2c4" stroke-width="1.5"/></svg><div class="a nw" style="left:357px;top:554.09px;font-size:11.7px;line-height:11.7px;color:#8a8a8a;">Console</div><svg style="left:411px;top:552px" width="14" height="15" viewBox="0 0 14 15"><rect x="0.5" y="0.5" width="12" height="14" fill="#f3f3f3" stroke="#b8b8b8"/><circle cx="5" cy="5" r="2.5" fill="#e98b8b"/><rect x="2" y="9" width="4" height="4" fill="#f0cf7a"/><rect x="8" y="9" width="4" height="4" fill="#a8c8e8"/></svg><div class="a nw" style="left:431px;top:554.09px;font-size:11.7px;line-height:11.7px;color:#8a8a8a;">Problems</div><svg style="left:493px;top:552px" width="11" height="15" viewBox="0 0 11 15"><path d="M0.5 1.5H10.5V14.5H0.5Z" fill="#fbf7e4" stroke="#6f7b8a"/><path d="M2 0.5V2.5M4 0.5V2.5M6 0.5V2.5M8 0.5V2.5" stroke="#6f7b8a" stroke-width="0.8"/><path d="M6.5 4V10Q6.5 12 3.5 11.5" fill="none" stroke="#2f4fa8" stroke-width="1.6"/></svg><div class="a" style="left:510px;top:550px;width:65px;height:17px;background:#eef000;border-radius:2px"></div><div class="a nw" style="left:511px;top:554.43px;font-size:11.3px;line-height:11.3px;color:#0a0a0a;-webkit-text-stroke:0.12px #000;">Debug Shell</div><svg style="left:581px;top:554px" width="11" height="11" viewBox="0 0 11 11"><path d="M0.6 0.6H3.2L5.5 2.7L7.8 0.6H10.4V3.2L8.2 5.5L10.4 7.8V10.4H7.8L5.5 8.3L3.2 10.4H0.6V7.8L2.8 5.5L0.6 3.2Z" fill="#fff" stroke="#4a4a4a" stroke-width="1"/></svg><svg style="left:1193px;top:552px" width="15" height="15" viewBox="0 0 15 15"><circle cx="6" cy="6" r="4.5" fill="#fff" stroke="#b4b4b4" stroke-width="1.4"/><path d="M9.5 9.5L14 14" stroke="#a0a0a0" stroke-width="2"/></svg><svg style="left:1218px;top:552px" width="12" height="15" viewBox="0 0 12 15"><path d="M0.5 1.5H11.5V14.5H0.5Z" fill="#f7f7f7" stroke="#a8a8a8"/><path d="M7 4V10Q7 12 4 11.5" fill="none" stroke="#8a8a8a" stroke-width="1.5"/></svg><svg style="left:1239px;top:552px" width="17" height="15" viewBox="0 0 17 15"><circle cx="5" cy="5" r="4.6" fill="#a0a0a0"/><path d="M3.5 2.5L7.5 5L3.5 7.5Z" fill="#fff"/><path d="M7.5 5.5H15.5V14.5H7.5Z" fill="#f7f7f7" stroke="#a8a8a8"/><path d="M12 7V11.5Q12 13 10 12.5" fill="none" stroke="#8a8a8a" stroke-width="1.3"/></svg><div class="a nw" style="left:1262px;top:550px;font-size:9.5px;color:#9a9a9a;line-height:9px">x+y</div><div class="a nw" style="left:1263px;top:558px;font-size:9.5px;color:#9a9a9a;line-height:9px">=?</div><svg style="left:1286px;top:552px" width="16" height="16" viewBox="0 0 16 16"><path d="M0.5 0.5H9L11.5 3V14.5H0.5Z" fill="#f5f0d0" stroke="#c2b066"/><path d="M2.5 5H9M2.5 7.5H9M2.5 10H8" stroke="#4f78c0"/><path d="M9 10L15 15.5M15 10L9 15.5" stroke="#5a5a5a" stroke-width="1.8"/></svg><div class="a" style="left:1311px;top:554px;width:10px;height:4px;border:1px solid #3a3a3a;background:#fff"></div><div class="a" style="left:1334px;top:554px;width:10px;height:10px;border:1px solid #3a3a3a;background:#fff"></div><div class="a" style="left:1334px;top:556px;width:10px;height:1px;background:#3a3a3a"></div><div class="a" style="left:334px;top:571px;width:1022px;height:129px;background:#fff"></div><div class="a nw" style="left:336.8px;top:575.86px;font-size:11.62px;line-height:11.62px;color:#0a0a0a;-webkit-text-stroke:0.12px #000;">Use this area to write, run and inspect Java expressions in the context of a debug session.</div><div class="a" style="left:334px;top:589px;width:1014px;height:1px;background:#8f8f8f"></div><div class="a mono nw" style="left:337px;top:592.45px;font-size:13.33px;line-height:17px;color:#000;">Math.pow(sqrt,2);</div><div class="a" style="left:1340px;top:590px;width:15px;height:94px;background:#eeeeee"></div><svg style="left:1343px;top:599px" width="9" height="6" viewBox="0 0 9 6"><path d="M0.5 5L4.5 1L8.5 5" fill="none" stroke="#b8b8b8" stroke-width="1.6"/></svg><svg style="left:1343px;top:670px" width="9" height="6" viewBox="0 0 9 6"><path d="M0.5 1L4.5 5L8.5 1" fill="none" stroke="#b8b8b8" stroke-width="1.6"/></svg><div class="a" style="left:334px;top:684px;width:1006px;height:14px;background:#eeeeee"></div><svg style="left:339px;top:687px" width="6" height="9" viewBox="0 0 6 9"><path d="M5 0.5L1 4.5L5 8.5" fill="none" stroke="#b8b8b8" stroke-width="1.6"/></svg><svg style="left:1328px;top:687px" width="6" height="9" viewBox="0 0 6 9"><path d="M1 0.5L5 4.5L1 8.5" fill="none" stroke="#b8b8b8" stroke-width="1.6"/></svg><div class="a" style="left:1340px;top:684px;width:15px;height:14px;background:#f2f2f2"></div></body></html>
